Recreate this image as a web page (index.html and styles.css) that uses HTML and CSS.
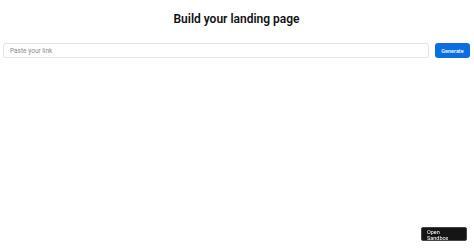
FILE: index.html
```html
<!DOCTYPE html>
<html lang="en">
<head>
    <meta charset="UTF-8">
    <meta name="viewport" content="width=device-width, initial-scale=1.0">
    <title>Build your landing page</title>
    <link rel="stylesheet" href="styles.css">
</head>
<body>

    <div class="page">
        <h1>Build your landing page</h1>
        <form class="link-form" onsubmit="return false;">
            <input type="text" class="link-input" placeholder="Paste your link">
            <button type="submit" class="generate-btn">Generate</button>
        </form>
    </div>

    <a href="#" class="sandbox-btn">Open<br>Sandbox</a>

</body>
</html>
```

FILE: styles.css
```css
body {
    font-family: Roboto, "Noto Sans", sans-serif;
    margin: 0;
    background-color: #fff;
    color: #111;
}

.page {
    padding: 11px 4px 0 3px;
}

h1 {
    margin: 0 0 16px;
    text-align: center;
    font-size: 12px;
    font-weight: 600;
    line-height: 16px;
}

.link-form {
    display: flex;
    gap: 6px;
}

.link-input {
    flex: 1;
    height: 15px;
    padding: 0 6px;
    box-sizing: border-box;
    border: 1px solid #e3e3e3;
    border-radius: 3px;
    font-family: inherit;
    font-size: 6.5px;
    outline: none;
}

.link-input::placeholder {
    color: #8a8a8a;
}

.generate-btn {
    width: 35px;
    height: 15px;
    padding: 0;
    border: none;
    border-radius: 3px;
    background-color: #0b6ede;
    color: #fff;
    font-family: inherit;
    font-size: 5.5px;
    font-weight: 500;
}

.sandbox-btn {
    position: fixed;
    right: 7px;
    bottom: 7px;
    width: 46px;
    height: 14px;
    box-sizing: border-box;
    padding: 1px 5px;
    background-color: #151515;
    border: 1px solid #444;
    border-radius: 2px;
    color: #fff;
    font-size: 5.5px;
    line-height: 6px;
    text-decoration: none;
}
```
